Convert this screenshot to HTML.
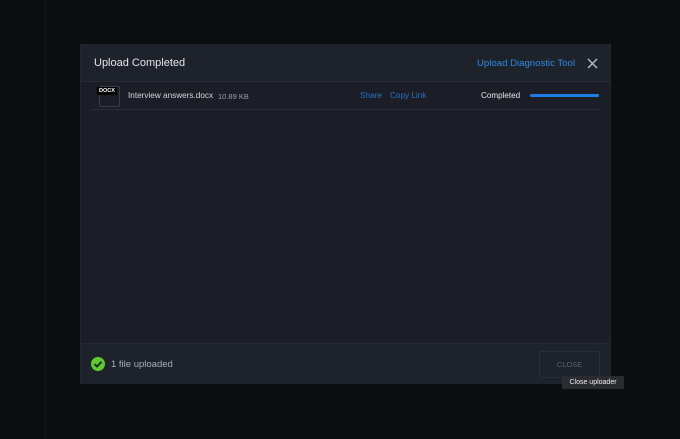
<!DOCTYPE html>
<html><head><meta charset="utf-8"><style>
*{margin:0;padding:0;box-sizing:border-box}
body{width:680px;height:439px;background:#0c0d11;font-family:"Liberation Sans",sans-serif;position:relative;overflow:hidden}
.strip{position:absolute;left:45px;top:0;width:1px;height:439px;background:#15171c}
.modal{position:absolute;left:80px;top:44px;width:531px;height:340px;background:#1b1e26;border:1px solid #22262e}
.hdr{height:37px;background:#1e222b;border-bottom:1px solid #262a33;position:relative}
.hdr .t{position:absolute;left:13px;top:12px;color:#e4e6ea;font-size:11px}
.hdr .d{position:absolute;left:396px;top:13px;color:#2d8ae6;font-size:9.6px}
.hdr svg{position:absolute;left:506px;top:13px}
.row{position:absolute;left:10px;top:37px;width:510px;height:28px;border-bottom:1px solid #2a2e37}
.file{position:absolute;left:8px;top:4px;width:21px;height:21px;border:1px solid #3a3e47;border-radius:2px}
.tag{position:absolute;left:6px;top:5px;background:#000;color:#fff;font-size:5.5px;font-weight:bold;padding:1px 2px}
.nm{position:absolute;left:37px;top:9px;color:#d6d8dc;font-size:8.2px}
.sz{position:absolute;left:127px;top:10px;color:#9a9ea6;font-size:7.5px}
.ln{position:absolute;top:9px;color:#2773c7;font-size:8.2px}
.cp{position:absolute;left:390px;top:9px;color:#e4e6ea;font-size:8.1px}
.bar{position:absolute;left:439px;top:12px;width:69px;height:3px;background:#1e7ee6;border-radius:2px}
.ftr{position:absolute;left:0;top:298px;width:529px;height:41px;background:#1e222b;border-top:1px solid #262a33}
.chk{position:absolute;left:10px;top:13px;width:14px;height:14px;border-radius:50%;background:#5fc92e}
.fu{position:absolute;left:30px;top:15px;color:#a9adb4;font-size:9.5px}
.btn{position:absolute;left:458px;top:7px;width:61px;height:27px;border:1px solid #2a2e37;border-radius:2px;color:#5d616a;font-size:7.5px;text-align:center;line-height:25px}
.tip{position:absolute;left:562px;top:376px;width:62px;height:13px;background:#2a2c31;color:#eee;font-size:7px;line-height:13px;text-align:center}
</style></head><body>
<div class="strip"></div>
<div class="modal">
 <div class="hdr"><div class="t">Upload Completed</div><div class="d">Upload Diagnostic Tool</div>
 <svg width="11" height="11" viewBox="0 0 11 11"><path d="M1 1L10 10M10 1L1 10" stroke="#b5b8be" stroke-width="1.5"/></svg></div>
 <div class="row">
  <div class="file"></div><div class="tag">DOCX</div>
  <div class="nm">Interview answers.docx</div><div class="sz">10.89 KB</div>
  <div class="ln" style="left:269px">Share</div><div class="ln" style="left:299px">Copy Link</div>
  <div class="cp">Completed</div><div class="bar"></div>
 </div>
 <div class="ftr">
  <div class="chk"><svg width="14" height="14" viewBox="0 0 14 14"><path d="M3.5 7.2L6 9.5L10.5 4.8" stroke="#1b1e26" stroke-width="1.8" fill="none"/></svg></div>
  <div class="fu">1 file uploaded</div>
  <div class="btn">CLOSE</div>
 </div>
</div>
<div class="tip">Close uploader</div>
</body></html>
